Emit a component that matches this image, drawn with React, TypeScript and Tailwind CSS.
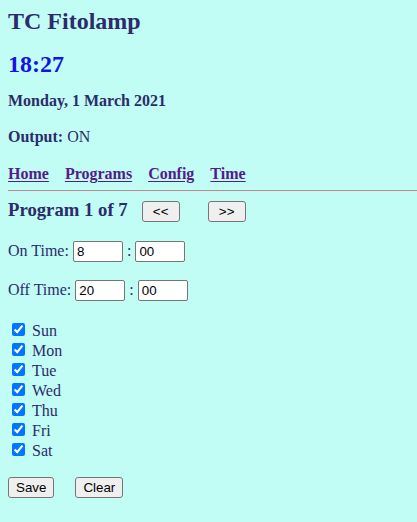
const days = ["Sun", "Mon", "Tue", "Wed", "Thu", "Fri", "Sat"];

const btn =
  "h-[21px] rounded-[3px] border border-[#767676] bg-[#efefef] text-[13.33px] leading-none text-black font-['Liberation_Sans',Arial,sans-serif]";

const field =
  "h-[21px] w-[50px] rounded-[2px] border border-[#767676] bg-white px-[3px] text-[13.33px] text-black font-['Liberation_Sans',Arial,sans-serif] outline-none";

function TimeRow({ label, hour, mt }: { label: string; hour: string; mt: string }) {
  return (
    <div className={`flex items-start gap-1 ${mt}`}>
      <span className="mt-[1px] leading-[18px]">{label}</span>
      <input type="text" defaultValue={hour} className={field} />
      <span className="mt-[1px] leading-[18px]">:</span>
      <input type="text" defaultValue="00" className={field} />
    </div>
  );
}

export default function App() {
  return (
    <div className="min-h-screen bg-[#c1fdf4] pt-[7px] pl-2 text-[16px] text-[#2d2b6b] font-['Liberation_Serif','Times_New_Roman',serif]">
      <h2 className="text-[24px] font-bold leading-[28px]">TC Fitolamp</h2>
      <div className="mt-[15px] text-[24px] font-bold leading-[28px] text-[#1414e6]">18:27</div>
      <div className="mt-[14px] font-bold leading-[18px]">Monday, 1 March 2021</div>
      <div className="mt-[18px] leading-[18px]">
        <b>Output:</b> ON
      </div>

      <nav className="mt-[19px] flex gap-4 font-bold leading-[18px] text-[#551a8b]">
        <a href="#" className="underline underline-offset-2">Home</a>
        <a href="#" className="underline underline-offset-2">Programs</a>
        <a href="#" className="underline underline-offset-2">Config</a>
        <a href="#" className="underline underline-offset-2">Time</a>
      </nav>

      <div className="mt-[7px] border-t border-b border-t-[#9c9c9c] border-b-[#e6e6e6]" />

      <div className="mt-[7px] flex items-start">
        <h3 className="text-[18.72px] font-bold leading-[21px]">Program 1 of 7</h3>
        <button type="button" className={`${btn} ml-[14px] mt-[2px] w-[38px]`}>
          &lt;&lt;
        </button>
        <button type="button" className={`${btn} ml-[28px] mt-[2px] w-[38px]`}>
          &gt;&gt;
        </button>
      </div>

      <TimeRow label="On Time:" hour="8" mt="mt-[19px]" />
      <TimeRow label="Off Time:" hour="20" mt="mt-[18px]" />

      <div className="mt-[19px] flex flex-col">
        {days.map((d) => (
          <label key={d} className="flex h-[20px] items-start">
            <input type="checkbox" defaultChecked className="ml-1 mt-[3px] h-[13px] w-[13px]" />
            <span className="ml-[7px] leading-[21px]">{d}</span>
          </label>
        ))}
      </div>

      <div className="mt-[17px] flex gap-[21px] pb-6">
        <button type="button" className={`${btn} px-[7px]`}>Save</button>
        <button type="button" className={`${btn} px-[7px]`}>Clear</button>
      </div>
    </div>
  );
}
